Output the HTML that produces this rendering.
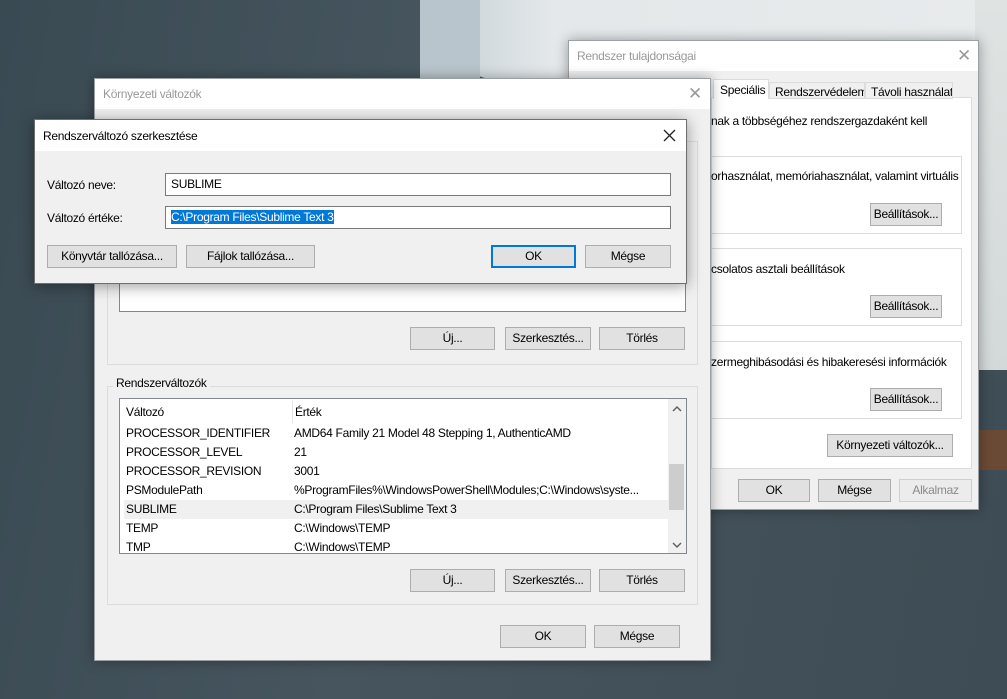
<!DOCTYPE html>
<html><head><meta charset="utf-8"><style>
*{box-sizing:border-box;margin:0;padding:0}
body{width:1007px;height:699px;position:relative;overflow:hidden;font-family:"Liberation Sans",sans-serif;font-size:12px;letter-spacing:-0.3px;color:#000;background:#3e4d56;white-space:nowrap}
.a{position:absolute}
.win{position:absolute;background:#f0f0f0;border:1px solid #9aa0a4;box-shadow:0 0 12px rgba(0,0,0,.35)}
.tb{position:absolute;left:0;right:0;top:0;height:30px;background:#fff}
.tt{position:absolute;left:8px;top:8px;color:#999;font-size:12px}
.x{position:absolute;top:6px;font-size:17px;color:#999;font-weight:normal}
.btn{position:absolute;height:23px;background:#e1e1e1;border:1px solid #adadad;text-align:center;line-height:21px;font-size:12px}
.grp{position:absolute;border:1px solid #dcdcdc}
.inp{position:absolute;height:23px;background:#fff;border:1px solid #7a7a7a;padding-left:5px;line-height:21px}
.row{position:absolute;left:6px;height:19px;line-height:19px;width:540px}
.row span{position:absolute;left:168px;white-space:nowrap}
</style></head><body>
<div class="a" style="left:0;top:0;width:1007px;height:699px;background:linear-gradient(100deg,#3a4a53 0%,#46555e 40%,#3e4c55 100%)"></div>
<div class="a" style="left:440px;top:0;width:567px;height:80px;background:linear-gradient(90deg,#c8d2d8,#e4e8ea 20%,#e8ebec);border-radius:0 0 0 60px"></div>
<div class="a" style="left:420px;top:0;width:60px;height:120px;background:#b9c5cc;border-radius:0 0 40px 40px"></div>
<div class="a" style="left:975px;top:0;width:32px;height:370px;background:linear-gradient(180deg,#dfe3e2,#d3d9d9)"></div>
<div class="a" style="left:975px;top:430px;width:32px;height:40px;background:#6b4a35"></div>

<!-- System properties -->
<div class="win" style="left:568px;top:40px;width:411px;height:470px">
 <div class="tb"></div>
 <div class="tt">Rendszer tulajdonságai</div>
 <div class="x" style="left:388px;top:5px">✕</div>
 <div class="a" style="left:142px;top:56px;width:261px;height:372px;background:#fff;border:1px solid #dcdcdc"></div>
 <div class="a" style="left:144px;top:38px;width:56px;height:20px;background:#fff;border:1px solid #dcdcdc;border-bottom:none;padding:3px 0 0 6px">Speciális</div>
 <div class="a" style="left:200px;top:41px;width:96px;height:17px;background:#f0f0f0;border:1px solid #dcdcdc;padding:2px 0 0 5px;overflow:hidden">Rendszervédelem</div>
 <div class="a" style="left:296px;top:41px;width:88px;height:17px;background:#f0f0f0;border:1px solid #dcdcdc;padding:2px 0 0 5px;overflow:hidden">Távoli használat</div>
 <div class="a" style="left:142px;top:73px">nak a többségéhez rendszergazdaként kell</div>
 <div class="grp" style="left:140px;top:115px;width:253px;height:78px"></div>
 <div class="a" style="left:142px;top:128px">orhasználat, memóriahasználat, valamint virtuális</div>
 <div class="btn" style="left:301px;top:162px;width:72px">Beállítások...</div>
 <div class="grp" style="left:140px;top:207px;width:253px;height:78px"></div>
 <div class="a" style="left:142px;top:221px">csolatos asztali beállítások</div>
 <div class="btn" style="left:301px;top:254px;width:72px">Beállítások...</div>
 <div class="grp" style="left:140px;top:300px;width:253px;height:78px"></div>
 <div class="a" style="left:142px;top:314px">zermeghibásodási és hibakeresési információk</div>
 <div class="btn" style="left:301px;top:347px;width:72px">Beállítások...</div>
 <div class="btn" style="left:258px;top:393px;width:126px">Környezeti változók...</div>
 <div class="btn" style="left:169px;top:438px;width:72px">OK</div>
 <div class="btn" style="left:249px;top:438px;width:73px">Mégse</div>
 <div class="btn" style="left:330px;top:438px;width:73px;color:#8a8a8a;background:#ececec;border-color:#cfcfcf">Alkalmaz</div>
</div>

<!-- Env vars -->
<div class="win" style="left:94px;top:78px;width:617px;height:583px">
 <div class="tb"></div>
 <div class="tt">Környezeti változók</div>
 <div class="x" style="left:593px;top:5px">✕</div>
 <div class="grp" style="left:12px;top:62px;width:591px;height:224px"></div>
 <div class="a" style="left:24px;top:180px;width:567px;height:53px;background:#fff;border:1px solid #828790"></div>
 <div class="btn" style="left:315px;top:248px;width:85px">Új...</div>
 <div class="btn" style="left:410px;top:248px;width:86px">Szerkesztés...</div>
 <div class="btn" style="left:504px;top:248px;width:86px">Törlés</div>
 <div class="grp" style="left:12px;top:307px;width:591px;height:219px"></div>
 <div class="a" style="left:18px;top:297px;background:#f0f0f0;padding:0 3px">Rendszerváltozók</div>
 <div class="a" style="left:24px;top:319px;width:568px;height:156px;background:#fff;border:1px solid #828790;overflow:hidden">
  <div class="a" style="left:172px;top:2px;width:1px;height:22px;background:#e5e5e5"></div>
  <div class="a" style="left:6px;top:6px">Változó</div>
  <div class="a" style="left:175px;top:6px">Érték</div>
  <div class="row" style="top:25px">PROCESSOR_IDENTIFIER<span>AMD64 Family 21 Model 48 Stepping 1, AuthenticAMD</span></div>
  <div class="row" style="top:44px">PROCESSOR_LEVEL<span>21</span></div>
  <div class="row" style="top:63px">PROCESSOR_REVISION<span>3001</span></div>
  <div class="row" style="top:82px">PSModulePath<span>%ProgramFiles%\WindowsPowerShell\Modules;C:\Windows\syste...</span></div>
  <div class="row" style="top:101px;left:4px;padding-left:2px;width:544px;background:#f0f0f0">SUBLIME<span style="left:170px">C:\Program Files\Sublime Text 3</span></div>
  <div class="row" style="top:120px">TEMP<span>C:\Windows\TEMP</span></div>
  <div class="row" style="top:139px">TMP<span>C:\Windows\TEMP</span></div>
  <div class="a" style="left:548px;top:0;width:18px;height:156px;background:#f0f0f0"></div>
  <div class="a" style="left:549px;top:65px;width:15px;height:46px;background:#cdcdcd"></div>
  <svg class="a" style="left:552px;top:6px" width="10" height="8"><path d="M1 6 L5 2 L9 6" fill="none" stroke="#606060" stroke-width="1.5"/></svg>
  <svg class="a" style="left:552px;top:142px" width="10" height="8"><path d="M1 2 L5 6 L9 2" fill="none" stroke="#606060" stroke-width="1.5"/></svg>
 </div>
 <div class="btn" style="left:315px;top:490px;width:85px">Új...</div>
 <div class="btn" style="left:410px;top:490px;width:86px">Szerkesztés...</div>
 <div class="btn" style="left:504px;top:490px;width:86px">Törlés</div>
 <div class="btn" style="left:405px;top:546px;width:86px">OK</div>
 <div class="btn" style="left:499px;top:546px;width:86px">Mégse</div>
</div>

<!-- Edit dialog -->
<div class="win" style="left:34px;top:119px;width:653px;height:165px;border-color:#6e6e6e;box-shadow:0 2px 14px rgba(0,0,0,.4)">
 <div class="tb" style="height:31px"></div>
 <div class="a" style="left:8px;top:9px">Rendszerváltozó szerkesztése</div>
 <svg class="a" style="left:628px;top:9px" width="13" height="13"><path d="M1 1 L12 12 M12 1 L1 12" stroke="#222" stroke-width="1.3"/></svg>
 <div class="a" style="left:12px;top:58px">Változó neve:</div>
 <div class="a" style="left:12px;top:91px">Változó értéke:</div>
 <div class="inp" style="left:130px;top:53px;width:506px">SUBLIME</div>
 <div class="inp" style="left:130px;top:86px;width:506px"><span style="background:#0078d7;color:#fff">C:\Program Files\Sublime Text 3</span></div>
 <div class="btn" style="left:12px;top:125px;width:130px">Könyvtár tallózása...</div>
 <div class="btn" style="left:151px;top:125px;width:129px">Fájlok tallózása...</div>
 <div class="btn" style="left:456px;top:125px;width:85px;border:2px solid #0078d7;line-height:19px">OK</div>
 <div class="btn" style="left:550px;top:125px;width:86px">Mégse</div>
</div>
</body></html>
